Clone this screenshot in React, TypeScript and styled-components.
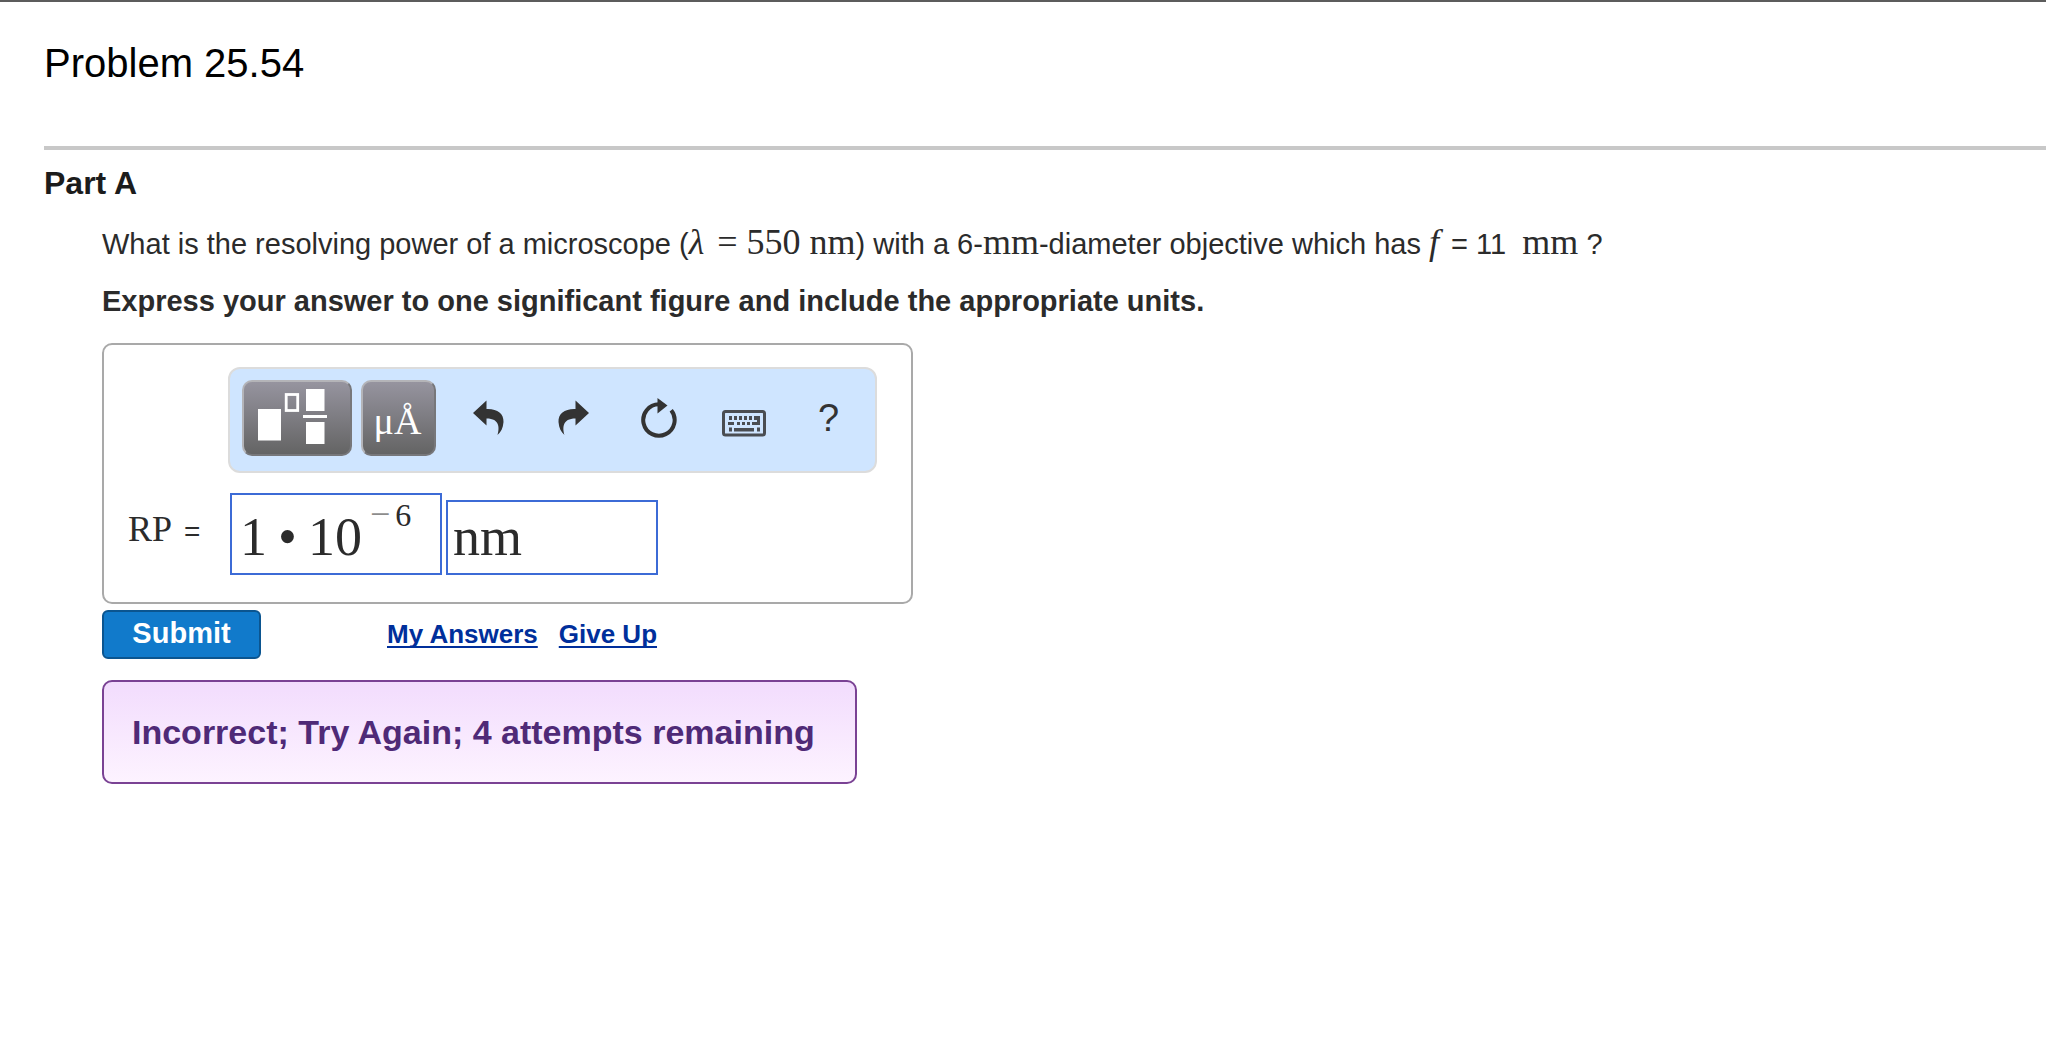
import React from "react";
import styled, { createGlobalStyle } from "styled-components";

const sans = `"Liberation Sans", Arial, sans-serif`;
const serif = `"Liberation Serif", "Times New Roman", serif`;

const GlobalStyle = createGlobalStyle`
  *, *::before, *::after { box-sizing: border-box; }
  body {
    margin: 0;
    background: #fff;
    color: #2b2b2b;
    font-family: ${sans};
  }
`;

const Page = styled.main`
  border-top: 2px solid #5c5c5c;
  padding: 38px 0 60px 44px;
`;

const Title = styled.h1`
  margin: 0 0 60px;
  font-size: 40px;
  line-height: 46px;
  font-weight: 400;
  color: #000;
`;

const Part = styled.section`
  border-top: 4px solid #c8c8c8;
  padding-top: 15px;
`;

const PartTitle = styled.h2`
  margin: 0 0 25px;
  font-size: 32px;
  line-height: 36px;
  font-weight: 700;
  color: #1c1c1c;
`;

const PartBody = styled.div`
  padding-left: 58px;
`;

const Question = styled.p`
  margin: 0 0 21px;
  font-size: 29px;
  line-height: 36px;
`;

const Instructions = styled.p`
  margin: 0 0 24px;
  font-size: 29px;
  line-height: 36px;
  font-weight: 700;
`;

const MathText = styled.span`
  font-family: ${serif};
  font-size: 36px;
  line-height: 0;
`;

const MathVariable = styled(MathText)`
  margin-right: 4px;
  font-style: italic;
`;

const AnswerCard = styled.form`
  display: grid;
  grid-template-columns: 100px auto;
  justify-content: start;
  row-gap: 20px;
  width: fit-content;
  padding: 22px 34px 27px 24px;
  border: 2px solid #a9a9a9;
  border-radius: 10px;
`;

const Toolbar = styled.div`
  grid-column: 2;
  display: flex;
  align-items: center;
  height: 106px;
  padding: 0 5px 4px 12px;
  border: 2px solid #dcdcdc;
  border-radius: 12px;
  background: #cfe5ff;
`;

const PaletteButton = styled.button<{ $wide?: boolean }>`
  display: flex;
  align-items: center;
  justify-content: center;
  width: ${(p) => (p.$wide ? 110 : 75)}px;
  height: 76px;
  margin: 0 9px 0 0;
  padding: ${(p) => (p.$wide ? "0 8px 3px 0" : "5px 2px 0 0")};
  border: 2px solid;
  border-color: #b4b4b8 #77777a #77777a #b4b4b8;
  border-radius: 10px;
  background: linear-gradient(#96949f, #646464);
  color: #fff;
  font-family: ${serif};
  font-size: 38px;
  line-height: 40px;
  cursor: pointer;
`;

const ToolButton = styled.button`
  display: flex;
  align-items: center;
  justify-content: center;
  width: 85px;
  height: 76px;
  padding: 0 0 0 2px;
  border: 0;
  background: none;
  color: #333;
  font-family: ${sans};
  font-size: 38px;
  line-height: 46px;
  cursor: pointer;
`;

const AnswerLabel = styled.label`
  display: flex;
  align-items: baseline;
  align-self: center;
  gap: 12px;
  padding-bottom: 4px;
  font-size: 28px;
  line-height: 40px;
`;

const Fields = styled.div`
  display: flex;
  align-items: flex-end;
  gap: 4px;
  padding-left: 2px;
`;

const MathField = styled.div`
  width: 212px;
  height: 82px;
  padding: 14px 0 0 8px;
  border: 2px solid #3c6bd6;
  font-family: ${serif};
  font-size: 54px;
  line-height: 56px;
  white-space: nowrap;
  outline: none;
`;

const Dot = styled.span`
  margin: 0 11px;
`;

const Exponent = styled.sup`
  display: inline-flex;
  align-items: baseline;
  gap: 5px;
  margin-left: 8px;
  font-size: 32px;
  line-height: 0;
  vertical-align: 29px;
`;

const Minus = styled.span`
  color: #8c8c8c;
  font-size: 36px;
`;

const UnitField = styled.input`
  width: 212px;
  height: 75px;
  padding: 0 5px 2px;
  border: 2px solid #3c6bd6;
  border-radius: 0;
  background: #fff;
  color: inherit;
  font-family: ${serif};
  font-size: 54px;
  line-height: 56px;
  outline: none;
`;

const Actions = styled.div`
  display: flex;
  align-items: center;
  margin: 6px 0 21px;
`;

const SubmitButton = styled.button`
  width: 159px;
  height: 49px;
  margin-right: 126px;
  padding: 0 0 3px;
  border: 2px solid #0b5590;
  border-radius: 6px;
  background: #117acb;
  color: #fff;
  font-family: ${sans};
  font-size: 29px;
  line-height: 36px;
  font-weight: 700;
  cursor: pointer;
`;

const ActionLink = styled.a`
  margin-right: 21px;
  padding-bottom: 2px;
  color: #002f9b;
  font-size: 26px;
  line-height: 36px;
  font-weight: 700;
  text-decoration: underline;
  text-decoration-thickness: 2px;
  text-underline-offset: 3px;
  text-decoration-skip-ink: none;
`;

const Feedback = styled.div`
  width: fit-content;
  padding: 30px 40px 30px 28px;
  border: 2px solid #7a4294;
  border-radius: 10px;
  background: linear-gradient(#f2dcfd, #fdf3ff);
  color: #4f2a77;
  font-size: 34px;
  line-height: 40px;
  font-weight: 700;
`;

const TemplatesIcon = () => (
  <svg width="70" height="56" viewBox="0 0 70 56" fill="#fff" aria-hidden="true">
    <rect x="0" y="20" width="23" height="31.500" />
    <rect x="28.200" y="5.500" width="11.500" height="16" fill="none" stroke="#fff" strokeWidth="2.800" />
    <rect x="48" y="0" width="18.500" height="22" />
    <rect x="45" y="26" width="24" height="3" />
    <rect x="48" y="33" width="18.500" height="22" />
  </svg>
);

const arrowPath =
  "M0 13 L13.500 0.500 V9 C24 8.500 31 13.500 30.500 22 C30 28 28 32 24.500 35 C26.500 28 27 18.500 13.500 18.500 V25.500 Z";

const UndoIcon = () => (
  <svg width="31" height="36" viewBox="0 0 31 36" fill="currentColor" aria-hidden="true">
    <path d={arrowPath} />
  </svg>
);

const RedoIcon = () => (
  <svg width="31" height="36" viewBox="0 0 31 36" fill="currentColor" aria-hidden="true">
    <path d={arrowPath} transform="matrix(-1 0 0 1 31 0)" />
  </svg>
);

const ResetIcon = () => (
  <svg width="36" height="42" viewBox="0 0 36 42" aria-hidden="true">
    <path
      d="M30.200 13.200 A15.700 15.700 0 1 1 18 7.300"
      fill="none"
      stroke="currentColor"
      strokeWidth="4"
    />
    <path d="M16.500 1 L26.500 8.500 L16.500 16.500 Z" fill="currentColor" />
  </svg>
);

const KeyboardIcon = () => (
  <svg width="44" height="38" viewBox="0 -11 44 38" fill="#4a4d52" aria-hidden="true">
    <rect x="1.500" y="1.500" width="41" height="23.500" rx="2" fill="none" stroke="#4a4d52" strokeWidth="3" />
    {[7, 12, 17, 22, 27, 32].map((x) => (
      <rect key={x} x={x} y="6" width="3" height="4" />
    ))}
    {[15, 20, 25, 30].map((x) => (
      <rect key={x} x={x} y="12" width="3" height="3" />
    ))}
    <rect x="6" y="12" width="6" height="3" />
    <path d="M35 6 h3 v9 h-5 v-3 h2 Z" />
    <rect x="7" y="17.500" width="3" height="4" />
    <rect x="12" y="18" width="20" height="3.500" />
    <rect x="35" y="17.500" width="3" height="4" />
  </svg>
);

export default function App() {
  return (
    <>
      <GlobalStyle />
      <Page>
        <Title>Problem 25.54</Title>
        <Part>
          <PartTitle>Part A</PartTitle>
          <PartBody>
            <Question>
              What is the resolving power of a microscope (<MathVariable>λ</MathVariable>
              <MathText> = 550 nm</MathText>) with a 6-<MathText>mm</MathText>
              -diameter objective which has <MathVariable>f</MathVariable> = 11{" \u00a0"}
              <MathText>mm</MathText> ?
            </Question>
            <Instructions>
              Express your answer to one significant figure and include the appropriate units.
            </Instructions>
            <AnswerCard onSubmit={(e) => e.preventDefault()} id="answer">
              <Toolbar role="toolbar" aria-label="Equation tools">
                <PaletteButton type="button" $wide aria-label="Templates">
                  <TemplatesIcon />
                </PaletteButton>
                <PaletteButton type="button">μÅ</PaletteButton>
                <ToolButton type="button" aria-label="Undo">
                  <UndoIcon />
                </ToolButton>
                <ToolButton type="button" aria-label="Redo">
                  <RedoIcon />
                </ToolButton>
                <ToolButton type="button" aria-label="Reset">
                  <ResetIcon />
                </ToolButton>
                <ToolButton type="button" aria-label="Keyboard shortcuts">
                  <KeyboardIcon />
                </ToolButton>
                <ToolButton type="button">?</ToolButton>
              </Toolbar>
              <AnswerLabel id="rp-label" htmlFor="rp-unit">
                <MathText>RP</MathText>
                <span>=</span>
              </AnswerLabel>
              <Fields>
                <MathField
                  role="textbox"
                  aria-labelledby="rp-label"
                  contentEditable
                  suppressContentEditableWarning
                  spellCheck={false}
                >
                  1<Dot>•</Dot>10
                  <Exponent>
                    <Minus>−</Minus>
                    <span>6</span>
                  </Exponent>
                </MathField>
                <UnitField id="rp-unit" defaultValue="nm" spellCheck={false} />
              </Fields>
            </AnswerCard>
            <Actions>
              <SubmitButton type="submit" form="answer">
                Submit
              </SubmitButton>
              <ActionLink href="#answers">My Answers</ActionLink>
              <ActionLink href="#give-up">Give Up</ActionLink>
            </Actions>
            <Feedback role="status">Incorrect; Try Again; 4 attempts remaining</Feedback>
          </PartBody>
        </Part>
      </Page>
    </>
  );
}
